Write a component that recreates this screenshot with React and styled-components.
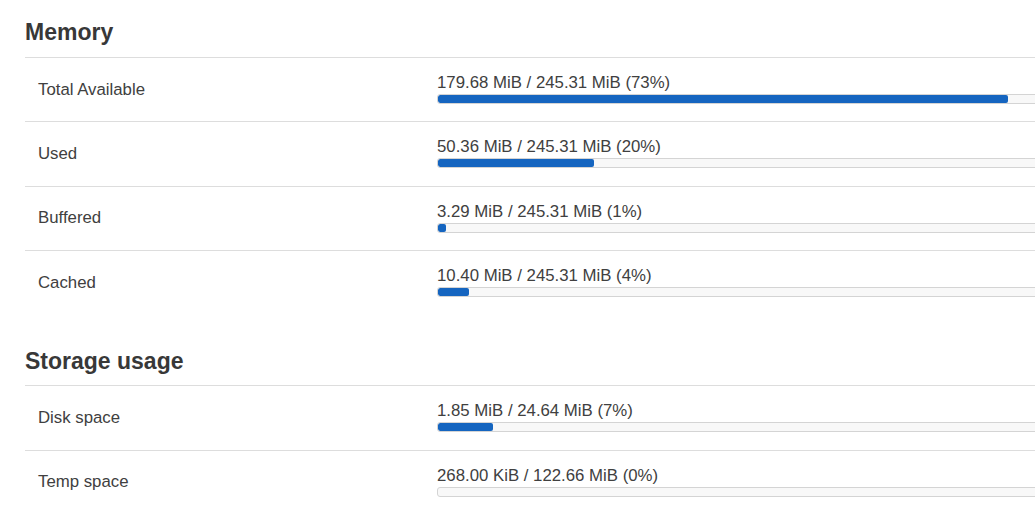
import React from 'react';
import styled, { createGlobalStyle } from 'styled-components';

const GlobalStyle = createGlobalStyle`
  html, body {
    margin: 0;
    padding: 0;
    background: #fff;
    overflow: hidden;
  }
  body {
    font-family: "Liberation Sans", Arial, sans-serif;
    color: #404040;
  }
`;

const Page = styled.div`
  width: 1208px;
  padding-left: 25px;
`;

const Section = styled.section`
  & + & {
    margin-top: 14px;
  }
`;

const Heading = styled.h3`
  margin: 0 0 10px;
  padding-top: 17px;
  font-size: 23px;
  line-height: 30px;
  font-weight: bold;
  color: #383838;

  ${Section} + ${Section} & {
    padding-top: 18px;
    margin-bottom: 9px;
  }
`;

const Table = styled.div`
  display: flex;
  flex-direction: column;
`;

const Row = styled.div`
  display: grid;
  grid-template-columns: 399px 1fr;
  height: 64.33px;
  box-sizing: border-box;
  border-top: 1px solid #ddd;
  align-items: center;
`;

const Label = styled.div`
  padding: 0 13px;
  font-size: 16.8px;
  line-height: 20px;
  color: #404040;
`;

const Value = styled.div`
  padding: 0 13px;
  display: flex;
  flex-direction: column;
  gap: 1px;
  margin-top: -2px;
`;

const ValueText = styled.div`
  font-size: 16.8px;
  line-height: 20px;
  color: #404040;
  white-space: nowrap;
`;

const Bar = styled.div`
  height: 10px;
  box-sizing: border-box;
  border: 1px solid #d4d4d4;
  border-radius: 3px;
  background: #f8f8f8;
  overflow: hidden;
`;

const Fill = styled.div`
  height: 100%;
  background: #1565c0;
  border-radius: 2px;
`;

const memory = [
  { label: 'Total Available', text: '179.68 MiB / 245.31 MiB (73%)', pct: 73 },
  { label: 'Used', text: '50.36 MiB / 245.31 MiB (20%)', pct: 20 },
  { label: 'Buffered', text: '3.29 MiB / 245.31 MiB (1%)', pct: 1 },
  { label: 'Cached', text: '10.40 MiB / 245.31 MiB (4%)', pct: 4 },
];

const storage = [
  { label: 'Disk space', text: '1.85 MiB / 24.64 MiB (7%)', pct: 7 },
  { label: 'Temp space', text: '268.00 KiB / 122.66 MiB (0%)', pct: 0 },
];

const UsageRow = ({ label, text, pct }) => (
  <Row>
    <Label>{label}</Label>
    <Value>
      <ValueText>{text}</ValueText>
      <Bar>{pct > 0 && <Fill style={{ width: `${pct}%` }} />}</Bar>
    </Value>
  </Row>
);

const UsageSection = ({ title, rows }) => (
  <Section>
    <Heading>{title}</Heading>
    <Table>
      {rows.map((r) => (
        <UsageRow key={r.label} {...r} />
      ))}
    </Table>
  </Section>
);

const App = () => (
  <>
    <GlobalStyle />
    <Page>
      <UsageSection title="Memory" rows={memory} />
      <UsageSection title="Storage usage" rows={storage} />
    </Page>
  </>
);

export default App;
